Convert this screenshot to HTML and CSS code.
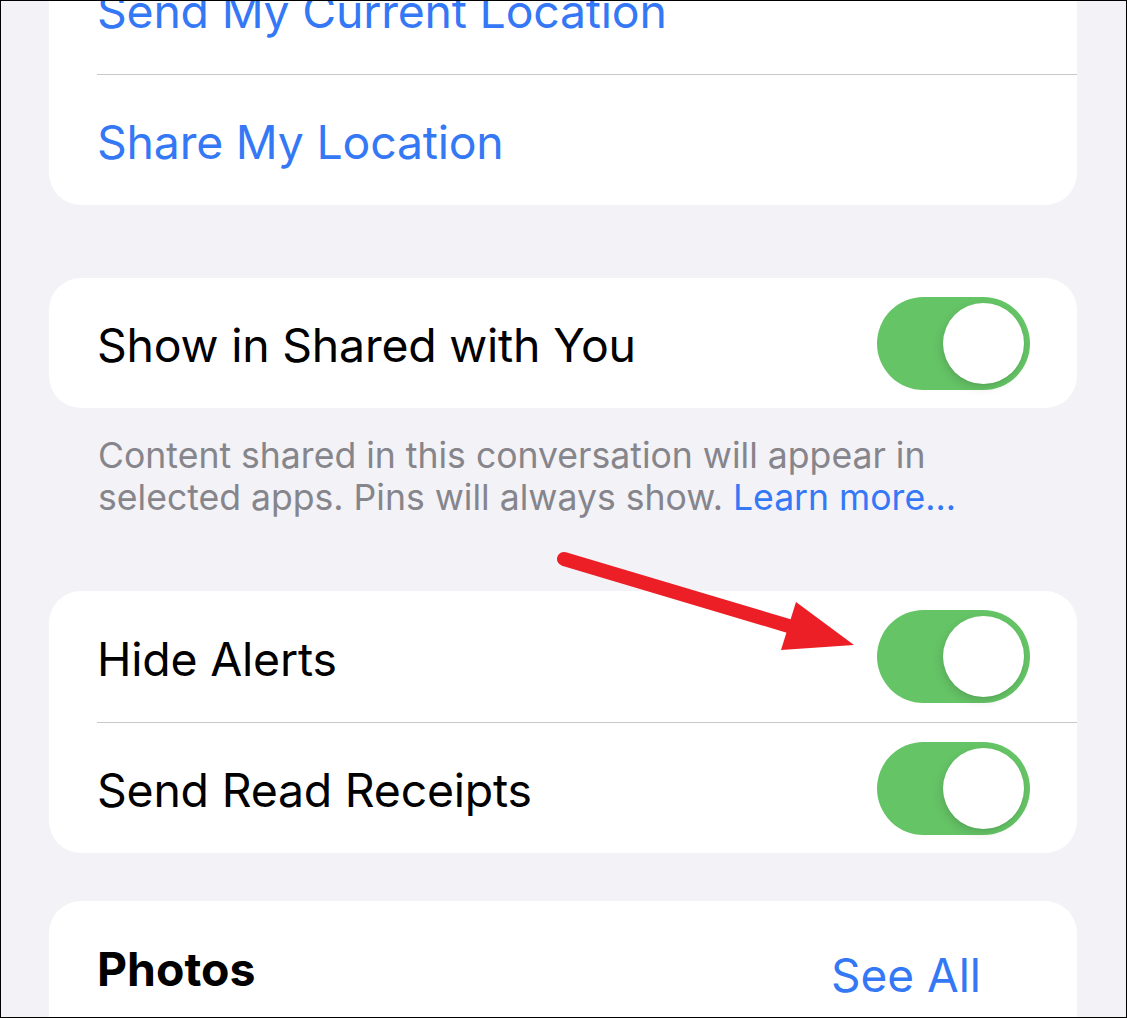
FILE: index.html
```html
<!DOCTYPE html>
<html lang="en">
<head>
<meta charset="utf-8">
<title>Conversation details</title>
<link rel="stylesheet" href="styles.css">
</head>
<body>
<div class="screen">
  <div class="scroll">
    <section class="card card-location">
      <div class="row row-tall"><span class="link-text">Send My Current Location</span></div>
      <div class="sep"></div>
      <div class="row"><span class="link-text">Share My Location</span></div>
    </section>

    <section class="card card-shared">
      <div class="row">
        <span class="label">Show in Shared with You</span>
        <span class="toggle on"><span class="knob"></span></span>
      </div>
    </section>
    <p class="footnote">Content shared in this conversation will appear in selected apps. Pins will always show. <span class="footnote-link">Learn more…</span></p>

    <section class="card card-alerts">
      <div class="row row-tall">
        <span class="label">Hide Alerts</span>
        <span class="toggle on"><span class="knob"></span></span>
      </div>
      <div class="sep"></div>
      <div class="row">
        <span class="label">Send Read Receipts</span>
        <span class="toggle on"><span class="knob"></span></span>
      </div>
    </section>

    <section class="card card-photos">
      <div class="photos-head">
        <span class="photos-title">Photos</span>
        <span class="see-all">See All</span>
      </div>
    </section>
  </div>

  <svg class="callout-arrow" width="1127" height="1018" viewBox="0 0 1127 1018" aria-hidden="true">
    <line x1="564" y1="559" x2="792" y2="627" stroke="#ec1f27" stroke-width="14" stroke-linecap="round"/>
    <polygon points="796,602 781,650 854,645" fill="#ec1f27"/>
  </svg>
</div>
</body>
</html>
```

FILE: styles.css
```css
* { box-sizing: border-box; }

html, body {
  margin: 0;
  padding: 0;
  background: #ffffff;
}

.screen {
  position: relative;
  width: 1127px;
  height: 1018px;
  border: 1px solid #000;
  background: #f2f2f7;
  overflow: hidden;
  font-family: "Inter", "Noto Sans", "Liberation Sans", sans-serif;
  -webkit-font-smoothing: antialiased;
}

.scroll {
  display: flex;
  flex-direction: column;
  margin-top: -58px;
}

.card {
  width: 1028px;
  margin-left: 48px;
  background: #ffffff;
  border-radius: 32px;
  display: flex;
  flex-direction: column;
}

.card-shared { margin-top: 73px; }
.card-alerts { margin-top: 0; }
.card-photos { margin-top: 48px; height: 200px; }

.row {
  height: 130px;
  padding: 0 47px 0 48px;
  display: flex;
  align-items: center;
  justify-content: space-between;
}

.row-tall { height: 131px; }

.sep {
  height: 1px;
  margin-left: 48px;
  background: #c8c7cc;
}

.label,
.link-text {
  padding-top: 4px;
  font-size: 46.4px;
  line-height: 58px;
  letter-spacing: -0.2px;
  color: #000;
}

.link-text { color: #3478f6; }

.footnote {
  margin: 0;
  padding: 27px 120px 72px 97px;
  font-size: 35.6px;
  line-height: 42px;
  color: #86858b;
  letter-spacing: 0;
}

.footnote-link { color: #3478f6; }

/* iOS style switch */
.toggle {
  position: relative;
  flex: none;
  width: 153px;
  height: 93px;
  border-radius: 47px;
  background: #65c466;
}

.toggle .knob {
  position: absolute;
  top: 6px;
  right: 6px;
  width: 81px;
  height: 81px;
  border-radius: 50%;
  background: #fff;
  box-shadow: -2px 4px 10px rgba(0, 0, 0, 0.12), 0 1px 2px rgba(0, 0, 0, 0.06);
}

.photos-head {
  display: flex;
  justify-content: space-between;
  align-items: flex-start;
  padding: 39px 96px 0 48px;
}

.photos-title {
  font-size: 46.4px;
  line-height: 58px;
  font-weight: 700;
  color: #000;
}

.see-all {
  margin-top: 6px;
  font-size: 46px;
  line-height: 58px;
  color: #3478f6;
}

.callout-arrow {
  position: absolute;
  left: -1px;
  top: -1px;
  pointer-events: none;
}
```
